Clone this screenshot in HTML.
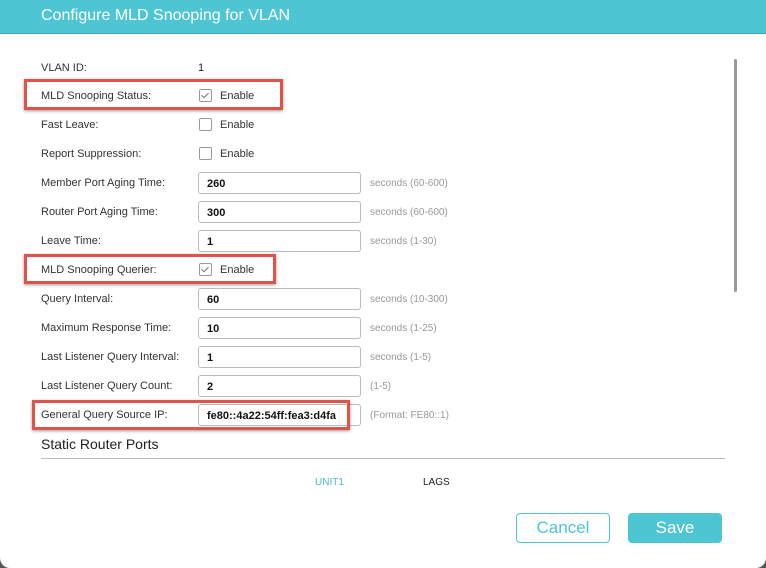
<!DOCTYPE html>
<html><head><style>
body{margin:0;width:766px;height:568px;background:#555;position:relative;overflow:hidden;font-family:"Liberation Sans",Arial,sans-serif;}
#d{position:absolute;left:0;top:0;width:766px;height:568px;background:#fff;border-radius:0 0 10px 10px;}
#h{position:absolute;left:0;top:0;width:766px;height:33px;background:#4ec5d2;border-bottom:1px solid #3aa9b6;}
#h span{position:absolute;left:41px;top:7px;color:#fff;font-size:16px;}
.l{position:absolute;left:41px;font-size:11px;color:#333;}
.v{position:absolute;left:198px;font-size:11px;color:#222;}
.i{position:absolute;left:198px;width:163px;height:22px;border:1px solid #bbb;border-radius:3px;box-sizing:border-box;font-size:11px;font-weight:bold;color:#111;padding:5px 0 0 8px;background:#fff;}
.hn{position:absolute;left:370px;font-size:10px;color:#999;}
.cb{position:absolute;left:199px;width:11px;height:11px;border:1px solid #999;border-radius:2px;}
.cb.c::after{content:"";position:absolute;left:3px;top:1px;width:3px;height:6px;border:solid #777;border-width:0 1px 1px 0;transform:rotate(45deg);}
.en{position:absolute;left:220px;font-size:11px;color:#333;}
.r{position:absolute;border:3px solid #e0534a;box-shadow:0 1px 3px rgba(0,0,0,.4);}
</style></head><body><div id="d">
<div id="h"><span>Configure MLD Snooping for VLAN</span></div>
<div style="position:absolute;left:734px;top:59px;width:3px;height:233px;background:#999;border-radius:2px"></div>

<div class="l" style="top:62px">VLAN ID:</div><div class="v" style="top:62px">1</div>
<div class="l" style="top:90px">MLD Snooping Status:</div><div class="cb c" style="top:89px"></div><div class="en" style="top:90px">Enable</div>
<div class="l" style="top:119px">Fast Leave:</div><div class="cb" style="top:118px"></div><div class="en" style="top:119px">Enable</div>
<div class="l" style="top:148px">Report Suppression:</div><div class="cb" style="top:147px"></div><div class="en" style="top:148px">Enable</div>
<div class="l" style="top:177px">Member Port Aging Time:</div><div class="i" style="top:172px">260</div><div class="hn" style="top:178px">seconds (60-600)</div>
<div class="l" style="top:206px">Router Port Aging Time:</div><div class="i" style="top:201px">300</div><div class="hn" style="top:207px">seconds (60-600)</div>
<div class="l" style="top:235px">Leave Time:</div><div class="i" style="top:230px">1</div><div class="hn" style="top:236px">seconds (1-30)</div>
<div class="l" style="top:264px">MLD Snooping Querier:</div><div class="cb c" style="top:263px"></div><div class="en" style="top:264px">Enable</div>
<div class="l" style="top:293px">Query Interval:</div><div class="i" style="top:288px">60</div><div class="hn" style="top:294px">seconds (10-300)</div>
<div class="l" style="top:322px">Maximum Response Time:</div><div class="i" style="top:317px">10</div><div class="hn" style="top:323px">seconds (1-25)</div>
<div class="l" style="top:351px">Last Listener Query Interval:</div><div class="i" style="top:346px">1</div><div class="hn" style="top:352px">seconds (1-5)</div>
<div class="l" style="top:380px">Last Listener Query Count:</div><div class="i" style="top:375px">2</div><div class="hn" style="top:381px">(1-5)</div>
<div class="l" style="top:409px">General Query Source IP:</div><div class="i" style="top:404px">fe80::4a22:54ff:fea3:d4fa</div><div class="hn" style="top:410px">(Format: FE80::1)</div>

<div class="r" style="left:24px;top:79px;width:253px;height:25px"></div>
<div class="r" style="left:24px;top:254px;width:246px;height:24px"></div>
<div class="r" style="left:32px;top:400px;width:312px;height:24px"></div>

<div style="position:absolute;left:41px;top:436px;font-size:14px;color:#222">Static Router Ports</div>
<div style="position:absolute;left:41px;top:458px;width:684px;height:1px;background:#bbb"></div>
<div style="position:absolute;left:315px;top:477px;font-size:10px;color:#4ab8c5">UNIT1</div>
<div style="position:absolute;left:423px;top:477px;font-size:10px;color:#222">LAGS</div>
<div style="position:absolute;left:516px;top:513px;width:94px;height:30px;border:1px solid #4ec5d2;border-radius:4px;box-sizing:border-box;color:#4ec5d2;font-size:17px;text-align:center;line-height:28px">Cancel</div>
<div style="position:absolute;left:628px;top:513px;width:94px;height:30px;background:#4ec5d2;border-radius:4px;color:#fff;font-size:17px;text-align:center;line-height:30px">Save</div>
</div></body></html>
